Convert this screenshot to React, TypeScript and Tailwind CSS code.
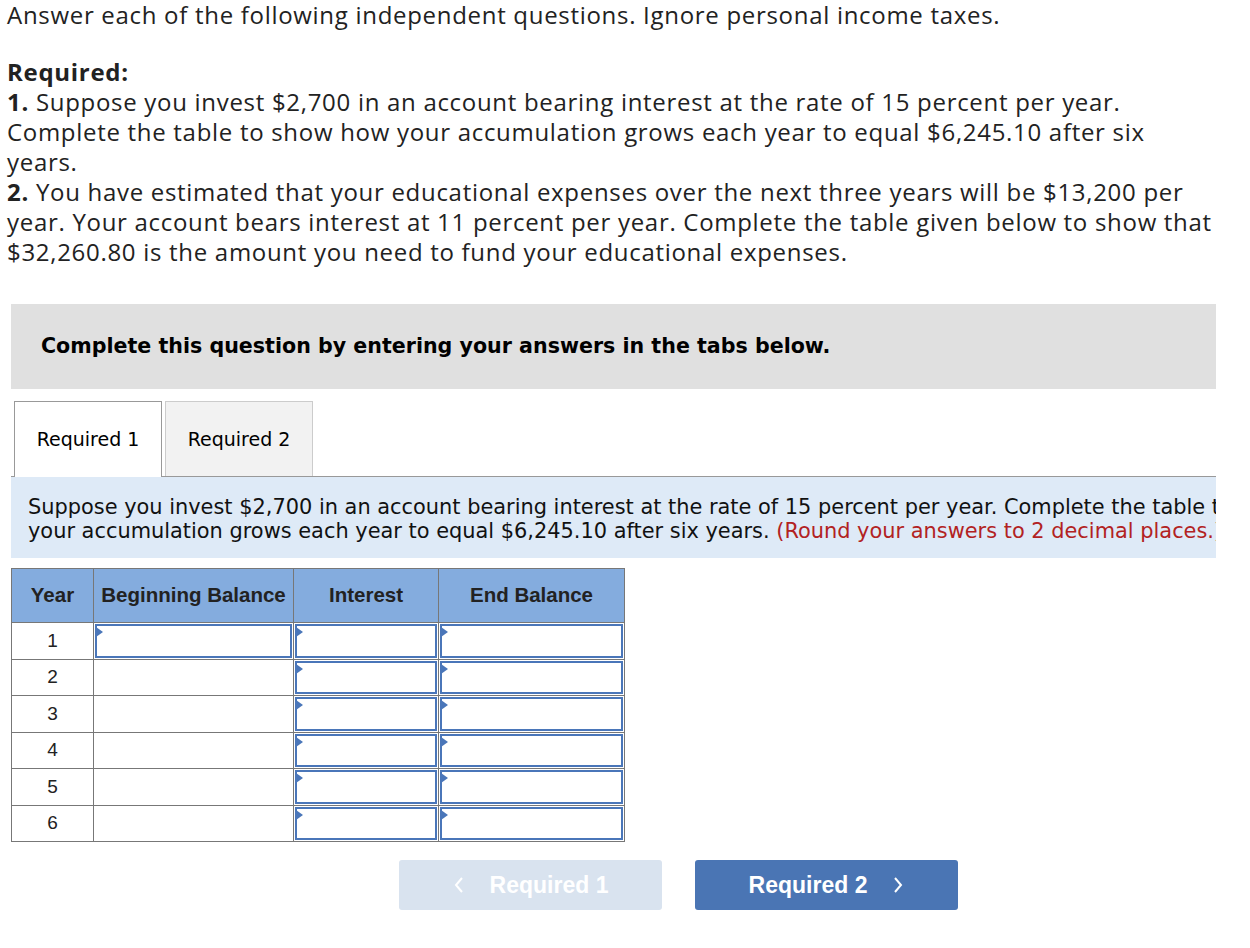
import React from "react";

const rows = [1, 2, 3, 4, 5, 6];

const InputBox = () => (
  <div className="relative h-full w-full border-2 border-[#4a76b9] bg-white">
    {/* little marker in the corner */}
    <span className="absolute -left-[1px] top-[1px] h-0 w-0 border-y-[5px] border-l-[7px] border-y-transparent border-l-[#4a76b9]" />
  </div>
);

export default function App() {
  return (
    <div className="min-h-screen bg-white text-[#1a1a1a]">
      {/* question text */}
      <div className="pl-[7px] font-['Open_Sans',sans-serif] text-[24px] leading-[30px] tracking-[0.7px] text-[#222]">
        <p>Answer each of the following independent questions. Ignore personal income taxes.</p>
        <div className="mt-[27px] whitespace-nowrap">
          <p className="font-bold">Required:</p>
          <p>
            <b>1.</b> Suppose you invest $2,700 in an account bearing interest at the rate of 15 percent per year.
            <br />
            Complete the table to show how your accumulation grows each year to equal $6,245.10 after six
            <br />
            years.
          </p>
          <p>
            <b>2.</b> You have estimated that your educational expenses over the next three years will be $13,200 per
            <br />
            year. Your account bears interest at 11 percent per year. Complete the table given below to show that
            <br />
            $32,260.80 is the amount you need to fund your educational expenses.
          </p>
        </div>
      </div>

      <div className="ml-[11px] w-[1205px]">
        {/* instruction banner */}
        <div className="mt-[37px] flex h-[85px] items-center bg-[#e0e0e0] pl-[30px] font-['DejaVu_Sans',sans-serif] text-[20.6px] font-bold text-black">
          Complete this question by entering your answers in the tabs below.
        </div>

        {/* tabs */}
        <div className="mt-[12px] flex gap-[3px] border-b border-[#999] pl-[3px] font-['DejaVu_Sans',sans-serif] text-[19px]">
          <div className="-mb-px flex h-[76px] w-[148px] items-center justify-center border border-b-0 border-[#999] bg-white text-black">
            Required 1
          </div>
          <div className="flex h-[75px] w-[148px] items-center justify-center border border-b-0 border-[#ccc] bg-[#f2f2f2] text-black">
            Required 2
          </div>
        </div>

        {/* prompt */}
        <div className="h-[81px] overflow-hidden bg-[#deeaf7] pl-[17px] pt-[18px] font-['DejaVu_Sans',sans-serif] text-[20.9px] leading-[24px] text-[#111]">
          <p className="whitespace-nowrap">
            Suppose you invest $2,700 in an account bearing interest at the rate of 15 percent per year. Complete the table to show how
            <br />
            your accumulation grows each year to equal $6,245.10 after six years.{" "}
            <span className="text-[#b22222]">(Round your answers to 2 decimal places.)</span>
          </p>
        </div>

        {/* table */}
        <table className="mt-[10px] border-collapse font-['Liberation_Sans',Arial,sans-serif] text-[20.5px]">
          <thead>
            <tr className="h-[54px] bg-[#84acde] text-[#222]">
              <th className="w-[82px] border border-[#777] font-bold">Year</th>
              <th className="w-[200px] whitespace-nowrap border border-[#777] font-bold">Beginning Balance</th>
              <th className="w-[145px] border border-[#777] font-bold">Interest</th>
              <th className="w-[186px] border border-[#777] font-bold">End Balance</th>
            </tr>
          </thead>
          <tbody>
            {rows.map((r) => (
              <tr key={r} className="h-[36.5px]">
                <td className="border border-[#777] text-center text-[19px] text-[#222]">{r}</td>
                <td className="h-[36.5px] border border-[#777] p-[1px]">{r === 1 && <InputBox />}</td>
                <td className="h-[36.5px] border border-[#777] p-[1px]">
                  <InputBox />
                </td>
                <td className="h-[36.5px] border border-[#777] p-[1px]">
                  <InputBox />
                </td>
              </tr>
            ))}
          </tbody>
        </table>

        {/* navigation */}
        <div className="mt-[18px] flex gap-[33px] pl-[388px] font-['Liberation_Sans',Arial,sans-serif] text-[23px] font-bold text-white">
          <button className="flex h-[50px] w-[263px] items-center justify-center gap-[25px] rounded-[3px] bg-[#d9e3ef]">
            <svg width="12" height="18" viewBox="0 0 12 18" fill="none" stroke="white" strokeWidth="2">
              <path d="M9 2 L3 9 L9 16" />
            </svg>
            <span>Required 1</span>
          </button>
          <button className="flex h-[50px] w-[263px] items-center justify-center gap-[25px] rounded-[3px] bg-[#4a75b4]">
            <span>Required 2</span>
            <svg width="12" height="18" viewBox="0 0 12 18" fill="none" stroke="white" strokeWidth="2">
              <path d="M3 2 L9 9 L3 16" />
            </svg>
          </button>
        </div>
      </div>
    </div>
  );
}
